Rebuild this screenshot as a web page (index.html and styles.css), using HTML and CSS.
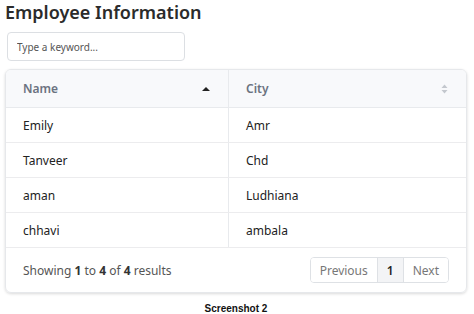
FILE: index.html
```html
<!DOCTYPE html>
<html lang="en">
<head>
    <meta charset="UTF-8">
    <title>Employee Information</title>
    <link rel="stylesheet" href="styles.css">
</head>
<body>
    <h1>Employee Information</h1>
    <input type="text" class="search" placeholder="Type a keyword...">

    <div class="card">
        <table>
            <thead>
                <tr>
                    <th><div class="th-inner">Name <span class="sort-up"></span></div></th>
                    <th><div class="th-inner">City
                        <svg class="sort-both" width="7" height="10" viewBox="0 0 7 10"><path d="M3.5 0.5 L6.5 4 L0.5 4 Z M3.5 9.5 L6.5 6 L0.5 6 Z" fill="#c4c8ce"/></svg>
                    </div></th>
                </tr>
            </thead>
            <tbody>
                <tr><td>Emily</td><td>Amr</td></tr>
                <tr><td>Tanveer</td><td>Chd</td></tr>
                <tr><td>aman</td><td>Ludhiana</td></tr>
                <tr><td>chhavi</td><td>ambala</td></tr>
            </tbody>
        </table>
        <div class="footer">
            <div class="info">Showing <b>1</b> to <b>4</b> of <b>4</b> results</div>
            <div class="pager">
                <button>Previous</button>
                <button class="active">1</button>
                <button>Next</button>
            </div>
        </div>
    </div>

    <p class="caption">Screenshot 2</p>
</body>
</html>
```

FILE: styles.css
```css
body {
    margin: 0;
    padding: 0 7px 0 5px;
    font-family: 'Noto Sans', sans-serif;
    color: #222;
    background: #fff;
}
h1 {
    margin: 0;
    padding-top: 1px;
    font-size: 18px;
    line-height: 22px;
    font-weight: 600;
    color: #2b2b2b;
}
.search {
    display: block;
    margin: 9px 0 8px 2px;
    width: 178px;
    height: 29px;
    box-sizing: border-box;
    padding: 0 9px;
    border: 1px solid #dcdfe3;
    border-radius: 4px;
    font-family: inherit;
    font-size: 10px;
}
.search::placeholder {
    color: #555;
}
.card {
    border: 1px solid #e6e8eb;
    border-radius: 6px;
    box-shadow: 0 1px 3px rgba(0, 0, 0, 0.15);
    overflow: hidden;
}
table {
    width: 100%;
    border-collapse: collapse;
    font-size: 12px;
}
th {
    background: #f8f9fb;
    color: #6b7280;
    font-weight: 600;
    text-align: left;
    height: 37px;
    padding: 0 17px;
    border-bottom: 1px solid #e8eaed;
}
th:first-child, td:first-child {
    width: 188px;
    border-right: 1px solid #e8eaed;
}
.th-inner {
    display: flex;
    justify-content: space-between;
    align-items: center;
}
.sort-up {
    width: 0;
    height: 0;
    border-left: 4px solid transparent;
    border-right: 4px solid transparent;
    border-bottom: 4px solid #222;
    margin-right: 1px;
}
.sort-both {
    margin-right: 1px;
}
td {
    height: 34px;
    padding: 0 17px;
    border-bottom: 1px solid #ececee;
    color: #222;
}
.footer {
    display: flex;
    justify-content: space-between;
    align-items: center;
    height: 44px;
    padding: 0 17px;
    font-size: 12px;
    color: #555;
}
.info b {
    color: #333;
}
.pager {
    display: flex;
    border: 1px solid #dee1e5;
    border-radius: 4px;
    overflow: hidden;
}
.pager button {
    border: none;
    background: #fff;
    font-family: inherit;
    font-size: 12px;
    color: #777;
    height: 24px;
    padding: 0 9px;
}
.pager button + button {
    border-left: 1px solid #dee1e5;
}
.pager .active {
    background: #f3f4f6;
    color: #222;
    font-weight: 600;
    padding: 0 9px;
}
.caption {
    margin: 10px 0 0;
    text-align: center;
    font-family: 'Liberation Sans', Arial, sans-serif;
    font-weight: bold;
    font-size: 10px;
    color: #111;
}
```
